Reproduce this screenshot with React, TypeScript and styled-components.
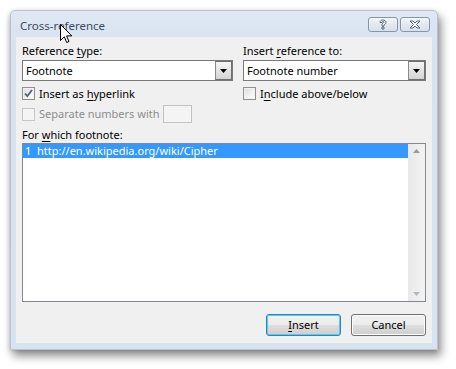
import React from 'react'
import styled, { createGlobalStyle, css } from 'styled-components'

const Global = createGlobalStyle`
  html, body {
    margin: 0;
    padding: 0;
    background: #ffffff;
  }
  body {
    font-family: "Noto Sans", Lato, "Liberation Sans", sans-serif;
    font-size: 11px;
    color: #000;
  }
`

const Page = styled.div`
  width: 456px;
  height: 369px;
  padding: 10px 0 0 10px;
  box-sizing: border-box;
  position: relative;
`

const Window = styled.div`
  width: 428px;
  height: 340px;
  box-sizing: border-box;
  background: linear-gradient(#dfe8f3, #d6e2f0 40px, #d7e3f1);
  border: 1px solid #b6c2d0;
  border-radius: 5px 5px 0 0;
  box-shadow: 3px 6px 10px rgba(0, 0, 0, 0.45), -1px 1px 4px rgba(0, 0, 0, 0.15);
  display: flex;
  flex-direction: column;
  padding: 0 5px 6px 5px;
`

const TitleBar = styled.div`
  height: 26px;
  display: flex;
  align-items: flex-start;
  justify-content: space-between;
`

const Title = styled.div`
  color: #3d4b5e;
  font-size: 11.5px;
  padding: 7px 0 0 4px;
`

const CaptionButtons = styled.div`
  display: flex;
  gap: 2px;
  padding-top: 6px;
  padding-right: 2px;
`

const CaptionButton = styled.div`
  width: 30px;
  height: 15px;
  box-sizing: border-box;
  border: 1px solid #8896a8;
  border-radius: 3px;
  background: linear-gradient(#f4f7fb, #e3e9f1 50%, #d8e0ea);
  display: flex;
  align-items: center;
  justify-content: center;
`

const Client = styled.div`
  flex: 1;
  background: #f0f0f0;
  padding: 6px 6px 0 6px;
  display: flex;
  flex-direction: column;
`

const TopGrid = styled.div`
  display: grid;
  grid-template-columns: 211px 183px;
  column-gap: 10px;
`

const Column = styled.div`
  display: flex;
  flex-direction: column;
`

const Label = styled.div<{ $disabled?: boolean }>`
  line-height: 16px;
  height: 16px;
  white-space: nowrap;
  color: ${p => (p.$disabled ? '#8d8d8d' : '#000')};
`

const Combo = styled.div`
  height: 21px;
  box-sizing: border-box;
  border: 1px solid #7a7a7a;
  background: #fff;
  display: flex;
  align-items: stretch;
  margin-top: 1px;
`

const ComboText = styled.div`
  flex: 1;
  padding-left: 3px;
  line-height: 19px;
`

const ComboArrow = styled.div`
  width: 17px;
  box-sizing: border-box;
  border: 1px solid #6f6f6f;
  border-left-color: #8a8a8a;
  background: linear-gradient(#f6f6f6, #e4e4e4 50%, #d4d4d4);
  display: flex;
  align-items: center;
  justify-content: center;
`

const CheckRow = styled.div<{ $tall?: boolean }>`
  display: flex;
  align-items: center;
  gap: 4px;
  height: ${p => (p.$tall ? '20px' : '17px')};
  margin-top: ${p => (p.$tall ? '2px' : '4px')};
  white-space: nowrap;
`

const Box = styled.div<{ $disabled?: boolean }>`
  width: 13px;
  height: 13px;
  box-sizing: border-box;
  border: 1px solid ${p => (p.$disabled ? '#c6c6c6' : '#8f8f8f')};
  background: ${p =>
    p.$disabled
      ? '#f4f4f4'
      : 'linear-gradient(135deg, #dcdcdc, #f6f6f6 70%, #ffffff)'};
  box-shadow: inset 0 0 0 1px ${p => (p.$disabled ? '#f4f4f4' : '#f2f2f2')};
  display: flex;
  align-items: center;
  justify-content: center;
`

const SmallInput = styled.div`
  width: 29px;
  height: 18px;
  box-sizing: border-box;
  border: 1px solid #c2c2c2;
  background: #f4f4f4;
`

const ListLabel = styled(Label)`
  margin-top: 4px;
  height: 15px;
  line-height: 14px;
`

const ListBox = styled.div`
  width: 404px;
  height: 159px;
  box-sizing: border-box;
  border: 1px solid #828790;
  background: #fff;
  display: flex;
`

const ListItems = styled.div`
  flex: 1;
`

const ListItem = styled.div<{ $selected?: boolean }>`
  height: 14px;
  line-height: 14px;
  padding-left: 2px;
  white-space: nowrap;
  ${p =>
    p.$selected &&
    css`
      background: #3399ff;
      color: #fff;
    `}
`

const ScrollBar = styled.div`
  width: 17px;
  background: linear-gradient(90deg, #e9e9e9, #f3f3f3);
  display: flex;
  flex-direction: column;
  justify-content: space-between;
  align-items: center;
  padding: 5px 0;
  box-sizing: border-box;
`

const ButtonRow = styled.div`
  display: flex;
  justify-content: flex-end;
  gap: 10px;
  margin-top: 12px;
`

const DialogButton = styled.div<{ $default?: boolean }>`
  width: 75px;
  height: 22px;
  box-sizing: border-box;
  border-radius: 3px;
  border: 1px solid ${p => (p.$default ? '#3c7fb1' : '#707070')};
  background: linear-gradient(#f2f2f2, #ebebeb 50%, #dddddd 51%, #cfcfcf);
  box-shadow: inset 0 0 0 1px ${p => (p.$default ? '#48d0f5' : '#fcfcfc')};
  display: flex;
  align-items: center;
  justify-content: center;
  line-height: 16px;
`

const Cursor = styled.svg`
  position: absolute;
  left: 60px;
  top: 24px;
`

const Key = styled.span`
  text-decoration: underline;
  text-underline-offset: 2px;
`

function DownArrow() {
  return (
    <svg width="7" height="4" viewBox="0 0 7 4">
      <path d="M0 0h7L3.5 4z" fill="#000" />
    </svg>
  )
}

export default function App() {
  return (
    <Page>
      <Global />
      <Window>
        <TitleBar>
          <Title>Cross-reference</Title>
          <CaptionButtons>
            <CaptionButton>
              <svg width="8" height="11" viewBox="0 0 8 11">
                <path
                  d="M1 3.5C1 1.8 2.3 1 4 1s3 0.9 3 2.4c0 1.3-1 1.8-2 2.3V7H3V5.2c0-0.9 1.9-1.2 1.9-2 0-0.4-0.4-0.7-0.9-0.7-0.6 0-1 0.4-1 1z M3 8h2v2H3z"
                  fill="#fff"
                  stroke="#4b5b70"
                  strokeWidth="0.9"
                />
              </svg>
            </CaptionButton>
            <CaptionButton>
              <svg width="12" height="9" viewBox="0 0 12 9">
                <path
                  d="M1 1h3l2 2 2-2h3L7.5 4.5 11 8H8L6 6 4 8H1l3.5-3.5z"
                  fill="#fff"
                  stroke="#4b5b70"
                  strokeWidth="0.9"
                  strokeLinejoin="round"
                />
              </svg>
            </CaptionButton>
          </CaptionButtons>
        </TitleBar>
        <Client>
          <TopGrid>
            <Column>
              <Label>
                Reference <Key>t</Key>ype:
              </Label>
              <Combo>
                <ComboText>Footnote</ComboText>
                <ComboArrow>
                  <DownArrow />
                </ComboArrow>
              </Combo>
              <CheckRow>
                <Box>
                  <svg width="9" height="9" viewBox="0 0 9 9">
                    <path
                      d="M1 4.5l2.3 2.6L8 1"
                      fill="none"
                      stroke="#4a5f97"
                      strokeWidth="1.8"
                    />
                  </svg>
                </Box>
                <span>
                  Insert as <Key>h</Key>yperlink
                </span>
              </CheckRow>
              <CheckRow $tall>
                <Box $disabled />
                <Label $disabled>Separate numbers with</Label>
                <SmallInput />
              </CheckRow>
            </Column>
            <Column>
              <Label>
                Insert <Key>r</Key>eference to:
              </Label>
              <Combo>
                <ComboText>Footnote number</ComboText>
                <ComboArrow>
                  <DownArrow />
                </ComboArrow>
              </Combo>
              <CheckRow>
                <Box />
                <span>
                  I<Key>n</Key>clude above/below
                </span>
              </CheckRow>
            </Column>
          </TopGrid>
          <ListLabel>
            For <Key>w</Key>hich footnote:
          </ListLabel>
          <ListBox>
            <ListItems>
              <ListItem $selected>1&nbsp;&nbsp;http://en.wikipedia.org/wiki/Cipher</ListItem>
            </ListItems>
            <ScrollBar>
              <svg width="7" height="4" viewBox="0 0 7 4">
                <path d="M0 4h7L3.5 0z" fill="#9a9a9a" />
              </svg>
              <svg width="7" height="4" viewBox="0 0 7 4">
                <path d="M0 0h7L3.5 4z" fill="#b8b8b8" />
              </svg>
            </ScrollBar>
          </ListBox>
          <ButtonRow>
            <DialogButton $default>
              <span>
                <Key>I</Key>nsert
              </span>
            </DialogButton>
            <DialogButton>Cancel</DialogButton>
          </ButtonRow>
        </Client>
      </Window>
      <Cursor width="13" height="20" viewBox="0 0 13 20">
        <path
          d="M0.5 0.5V16.5L4.3 12.8L6.7 18.5L9 17.5L6.6 11.9H11.8Z"
          fill="#fff"
          stroke="#000"
          strokeWidth="1"
          strokeLinejoin="round"
        />
      </Cursor>
    </Page>
  )
}
